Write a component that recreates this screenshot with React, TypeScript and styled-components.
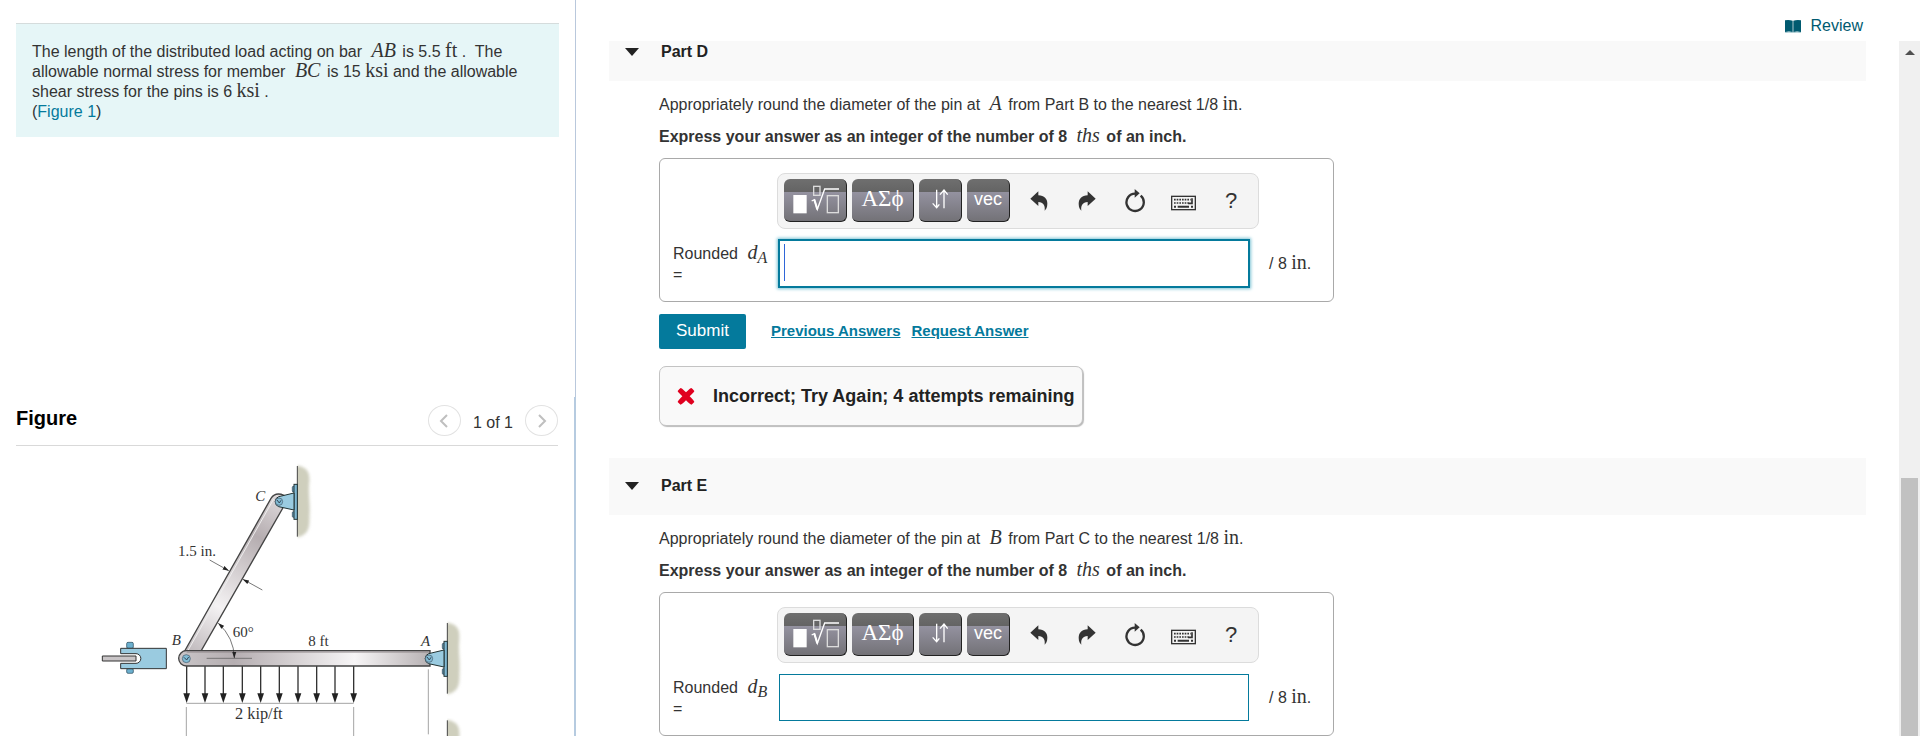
import React from "react";
import styled, { createGlobalStyle, css } from "styled-components";

const Global = createGlobalStyle`
  * { box-sizing: border-box; }
  body {
    margin: 0;
    background: #fff;
    color: #333;
    font-family: "Liberation Sans", Arial, sans-serif;
    font-size: 16px;
    line-height: 20px;
  }
  p, h2 { margin: 0; }
`;

const Page = styled.div`
  display: grid;
  grid-template-columns: 30% 1fr;
  height: 100vh;
  overflow: hidden;
`;

const Side = styled.aside`
  display: flex;
  flex-direction: column;
  min-height: 0;
`;

const ProblemPane = styled.section`
  flex: 0 0 54%;
  padding: 23px 16px 0;
  border-right: 1px solid #b9c8dc;
`;

const FigurePane = styled.section`
  flex: 1;
  min-height: 0;
  overflow: hidden;
  padding: 9px 16px 0;
  border-right: 2px solid #b6cbe0;
`;

const Intro = styled.div`
  padding: 18px 16px 15px;
  background: #e6f6f7;
  border-top: 1px solid #d5dcdc;
`;

const TextLink = styled.a`
  color: #047a9c;
  text-decoration: none;
`;

const mathFont = css`
  font-family: "Liberation Serif", "Times New Roman", serif;
  font-weight: 400;
  line-height: 0;
`;

const Var = styled.i`
  ${mathFont}
  font-size: 20px;
  padding: 0 2px 0 5px;
`;

const Unit = styled.span`
  ${mathFont}
  font-size: 20px;
`;

const Sub = styled.sub`
  font-size: 16px;
  line-height: 0;
  vertical-align: -4px;
`;

const FigureHead = styled.header`
  display: flex;
  align-items: center;
  justify-content: space-between;
  height: 40px;
  border-bottom: 1px solid #d9d9d9;
`;

const FigureTitle = styled.h2`
  color: #000;
  font-size: 20px;
  padding-bottom: 16px;
`;

const Pager = styled.nav`
  display: flex;
  align-items: center;
  gap: 12px;
  padding-bottom: 10px;
`;

const PagerText = styled.span`
  padding-top: 4px;
`;

const Round = styled.button`
  display: grid;
  place-items: center;
  width: 33px;
  height: 31px;
  padding: 0;
  background: #fff;
  border: 1px solid #e2e2e2;
  border-radius: 50%;
`;

const Drawing = styled.svg`
  display: block;
  width: 400px;
  height: 281px;
  margin: 9px 0 0 74px;
`;

const Main = styled.main`
  display: flex;
  flex-direction: column;
  min-width: 0;
  min-height: 0;
`;

const TopBar = styled.div`
  display: flex;
  flex: 0 0 41px;
  justify-content: flex-end;
  padding: 16px 57px 0 0;
`;

const Review = styled.a`
  display: flex;
  gap: 10px;
  height: 20px;
  align-items: center;
  color: #005a70;
  text-decoration: none;
`;

const Scroller = styled.div`
  display: flex;
  flex: 1;
  min-height: 0;
`;

const Parts = styled.div`
  flex: 1;
  min-width: 0;
  padding: 0 33px;
  overflow: hidden;
`;

const Track = styled.div`
  display: flex;
  flex-direction: column;
  justify-content: space-between;
  align-items: center;
  width: 21px;
  padding-top: 9px;
  background: #f0f0f0;
`;

const Thumb = styled.div`
  width: 17px;
  height: 258px;
  background: #c1c1c1;
`;

const PartHead = styled.header<{ $scrolled?: boolean }>`
  display: flex;
  align-items: center;
  gap: 22px;
  height: 57px;
  margin-top: ${(p) => (p.$scrolled ? "-17px" : "0")};
  padding: 0 0 2px 16px;
  background: #f9f9f9;
`;

const PartTitle = styled.h2`
  color: #222;
  font-size: 16px;
`;

const PartBody = styled.div`
  padding: 14px 0 32px 50px;
`;

const Prompt = styled.p<{ $strong?: boolean }>`
  margin-bottom: ${(p) => (p.$strong ? "11px" : "12px")};
  font-weight: ${(p) => (p.$strong ? 700 : 400)};
`;

const AnswerBox = styled.div`
  max-width: 675px;
  height: 144px;
  padding: 14px 13px;
  border: 1px solid #a9a9a9;
  border-radius: 6px;
`;

const Toolbar = styled.div`
  display: flex;
  gap: 5px;
  width: 482px;
  height: 56px;
  margin-left: 104px;
  padding: 5px 3px 5px 6px;
  background: #f4f4f4;
  border: 1px solid #dcdcdc;
  border-radius: 8px;
`;

const Key = styled.button<{ $w: number; $serif?: boolean }>`
  display: grid;
  flex: none;
  place-items: center;
  width: ${(p) => p.$w}px;
  height: 43px;
  padding: 0 0 2px;
  color: #fff;
  font-family: ${(p) => (p.$serif ? '"Liberation Serif", serif' : '"Liberation Sans", sans-serif')};
  font-size: ${(p) => (p.$serif ? "23px" : "18px")};
  line-height: 24px;
  background: linear-gradient(#6f6f6f 0, #646464 30%, #9492a0 31%, #737277 100%);
  border: 0;
  border-right: 1px solid #222;
  border-bottom: 1px solid #222;
  border-radius: 6px;
`;

const Tools = styled.div`
  display: flex;
  flex: 1;
`;

const Tool = styled.button`
  display: grid;
  flex: none;
  place-items: center;
  width: 48px;
  height: 43px;
  padding: 0;
  color: #333;
  font-family: inherit;
  font-size: 22px;
  background: none;
  border: 0;
`;

const AnswerRow = styled.div`
  display: flex;
  margin-top: 11px;
`;

const FieldLabel = styled.label`
  width: 106px;
  padding: 3px 4px 0 0;
  line-height: 21px;
`;

const Field = styled.div`
  position: relative;
  width: 470px;
`;

const Answer = styled.input<{ $active?: boolean }>`
  display: block;
  width: 100%;
  height: 47px;
  padding: 0 6px;
  font-size: 20px;
  border: 1px solid #047a9c;
  border-radius: 0;
  outline: none;
  box-shadow: ${(p) => (p.$active ? "0 0 0 1px #047a9c, 0 0 3px 2px #7fc4d6" : "none")};
`;

const Caret = styled.span`
  position: absolute;
  top: 4px;
  left: 5px;
  width: 1px;
  height: 37px;
  background: #2f66d8;
`;

const Suffix = styled.span`
  padding: 14px 0 0 20px;
`;

const Actions = styled.div`
  display: flex;
  align-items: center;
  gap: 11px;
  margin-top: 12px;
`;

const Submit = styled.button`
  width: 87px;
  height: 35px;
  margin-right: 14px;
  padding: 0 0 2px;
  color: #fff;
  font-family: inherit;
  font-size: 17px;
  background: #047a9c;
  border: 0;
  border-radius: 2px;
`;

const ActionLink = styled.a`
  padding-bottom: 2px;
  color: #047a9c;
  font-size: 15px;
  font-weight: 700;
`;

const Feedback = styled.div`
  display: flex;
  align-items: center;
  gap: 18px;
  width: fit-content;
  height: 60px;
  margin-top: 17px;
  padding: 0 8px 0 17px;
  color: #222;
  font-size: 18px;
  font-weight: 700;
  background: #f9f9f9;
  border: 1px solid #c3c3c3;
  border-radius: 7px;
  box-shadow: 1px 1px 1px #bbb;
`;

const Chevron = ({ next }: { next?: boolean }) => (
  <svg width="10" height="14" viewBox="0 0 10 14" fill="none" stroke="#bfbfbf" strokeWidth="2">
    <path d={next ? "M2 1l6 6-6 6" : "M8 1L2 7l6 6"} />
  </svg>
);

const BookIcon = () => (
  <svg width="16" height="13" viewBox="0 0 48 39" fill="#005a70">
    <path d="M0 1Q12-1 23 2V36Q12 33 0 36Z M25 2Q36-1 48 1V36Q36 33 25 36Z" />
    <path d="M0 38Q12 35 24 38Q36 35 48 38" fill="none" stroke="#7fb0bb" strokeWidth="2" />
  </svg>
);

const Triangle = () => (
  <svg width="14" height="8" viewBox="0 0 14 8" fill="#222">
    <path d="M0 0h14L7 8z" />
  </svg>
);

const RootIcon = () => (
  <svg width="48" height="29" viewBox="424 107 144 87" fill="none">
    <rect x="431" y="137" width="40" height="55" fill="#fff" />
    <rect x="492" y="111" width="19" height="27" stroke="#dcdcdc" strokeWidth="4" />
    <path d="M486 155l8-4 9 29 22-61h43" stroke="#fff" strokeWidth="4" />
    <path d="M494 151l9 29" stroke="#fff" strokeWidth="6" />
    <rect x="533" y="139" width="33" height="51" stroke="#dcdcdc" strokeWidth="4" />
  </svg>
);

const ArrowsIcon = () => (
  <svg width="16" height="20" viewBox="0 0 48 60" fill="none" stroke="#fff" strokeWidth="4">
    <path d="M14 2v54M2 43l12 13 8-10M36 58V5M24 17L36 3l11 14" />
  </svg>
);

const UndoIcon = ({ flip }: { flip?: boolean }) => (
  <svg width="18" height="20" viewBox="0 0 54 60" fill="#333">
    <path
      transform={flip ? "translate(54 0) scale(-1 1)" : undefined}
      d="M1 23L25 1V13C43 14 52 24 52 38C52 49 48 55 44 59C46 43 40 34 25 33V45Z"
    />
  </svg>
);

const ResetIcon = () => (
  <svg width="20" height="24" viewBox="0 0 60 72">
    <path d="M47 20A26 26 0 1 1 30 14" fill="none" stroke="#333" strokeWidth="7" />
    <path d="M29 0L44 13L29 26Z" fill="#333" />
  </svg>
);

const KeyboardIcon = () => (
  <svg width="25" height="20" viewBox="0 -12 75 60">
    <rect x="2" y="4" width="71" height="40" fill="none" stroke="#333" strokeWidth="4" />
    <path d="M9 14h50M9 24h44" stroke="#333" strokeWidth="5" strokeDasharray="5 3" />
    <path d="M9 35h6M20 35h34M60 35h6" stroke="#333" strokeWidth="6" />
    <path d="M63 10v15h-12" fill="none" stroke="#333" strokeWidth="5" />
  </svg>
);

const CrossIcon = () => (
  <svg width="18" height="17" viewBox="0 0 54 51" fill="#e0001f">
    <path d="M11 0Q14 0 27 13Q40 0 43 0Q46 1 52 9Q52 12 38 25Q52 39 52 42Q46 49 43 50Q40 50 27 37Q14 50 11 50Q8 49 2 42Q2 39 16 25Q2 12 2 9Q8 1 11 0Z" />
  </svg>
);

const LOADS = [290, 345, 400, 457, 512, 568, 624, 680, 735, 791];

const WALL = "M-12 -107H4C28 -100 36 -88 34 -60C30 -30 36 0 35 30C33 62 40 92 6 105H-12Z";

const Support = () => (
  <>
    <g clipPath="url(#wallSide)">
      <path d={WALL} fill="#cfcfbd" filter="url(#soft)" />
    </g>
    <path d="M-2 -107V105" stroke="#444" strokeWidth="3" />
    <rect x="-17" y="-46" width="6" height="17" rx="3" fill="#74b7d3" stroke="#234" strokeWidth="2" />
    <rect x="-17" y="30" width="6" height="17" rx="3" fill="#74b7d3" stroke="#234" strokeWidth="2" />
    <rect x="-12" y="-52" width="10" height="105" fill="#80b9d4" stroke="#233" strokeWidth="3" />
    <path d="M-12 -26L-58 -15A16 16 0 0 0 -58 15L-12 25Z" fill="#9acbe0" stroke="#233" strokeWidth="3" />
    <circle cx="-57" cy="0" r="11" fill="#82bdd5" stroke="#456" strokeWidth="2" />
    <path d="M-63 -5l7 9 5-8" fill="none" stroke="#345" strokeWidth="3" />
  </>
);

const Truss = () => (
  <Drawing viewBox="0 0 1200 843" role="img" aria-label="Bar AB supported by member BC">
    <defs>
      <linearGradient id="steel" x1="0" x2="1">
        <stop offset="0" stopColor="#c9c5c7" />
        <stop offset=".22" stopColor="#b5aeb1" />
        <stop offset=".7" stopColor="#f7f5f6" />
        <stop offset="1" stopColor="#b7b1b3" />
      </linearGradient>
      <linearGradient id="strut" gradientUnits="userSpaceOnUse" x1="300" y1="590" x2="570" y2="130">
        <stop offset="0" stopColor="#c0babd" />
        <stop offset=".3" stopColor="#f4f2f3" />
        <stop offset=".75" stopColor="#b5adb0" />
        <stop offset="1" stopColor="#ddd8da" />
      </linearGradient>
      <filter id="soft" x="-30%" y="-10%" width="160%" height="120%">
        <feGaussianBlur stdDeviation="4" />
      </filter>
      <clipPath id="wallSide">
        <rect x="-2" y="-115" width="60" height="230" />
      </clipPath>
      <marker id="tip" markerUnits="userSpaceOnUse" markerWidth="20" markerHeight="14" refX="18" refY="7" orient="auto-start-reverse">
        <path d="M0 1L19 7L0 13Z" fill="#222" />
      </marker>
    </defs>

    <path d="M284 588L543 130Q556 110 582 121L578 160L333 588Z" fill="url(#strut)" stroke="#444" strokeWidth="4" />
    <path d="M293 588L551 132" stroke="#eee" strokeWidth="3" />
    <path d="M289 587H1020V633H289A23 23 0 0 1 289 587Z" fill="url(#steel)" stroke="#444" strokeWidth="4" />
    <path d="M290 591H1016" stroke="#8d8588" strokeWidth="3" />
    <circle cx="289" cy="611" r="12" fill="#82bdd5" stroke="#456" strokeWidth="2" />
    <path d="M282 607l8 8 6-9" fill="none" stroke="#345" strokeWidth="3" />
    <path d="M350 610H486" stroke="#555" strokeWidth="2" />

    <g transform="translate(624 140)"><Support /></g>
    <g transform="translate(1074 611)"><Support /></g>
    <g transform="translate(1074 903)">
      <g clipPath="url(#wallSide)">
        <path d={WALL} fill="#cfcfbd" filter="url(#soft)" />
      </g>
      <path d="M-2 -107V0" stroke="#444" strokeWidth="3" />
    </g>

    <rect x="110" y="562" width="20" height="18" rx="4" fill="#6cb0cf" stroke="#245" strokeWidth="2" />
    <rect x="110" y="641" width="20" height="14" rx="4" fill="#6cb0cf" stroke="#245" strokeWidth="2" />
    <path d="M92 580H229V641H92V625H138A14 14 0 0 0 138 596H92Z" fill="#9acbe0" stroke="#333" strokeWidth="3" />
    <path d="M37 603H138V618H37Z" fill="#c9c5c7" stroke="#333" strokeWidth="3" />

    <g stroke="#333" strokeWidth="2" fill="none">
      <path d="M359 315L416 347" markerEnd="url(#tip)" />
      <path d="M517 405L459 373" markerEnd="url(#tip)" />
      <path d="M385 505Q432 548 433 609" markerStart="url(#tip)" markerEnd="url(#tip)" />
    </g>
    {LOADS.map((x) => (
      <g key={x}>
        <path d={`M${x} 634V720`} stroke="#333" strokeWidth="4" />
        <path d={`M${x - 10} 715h20l-10 29z`} fill="#222" />
      </g>
    ))}
    <path d="M289 745H791M289 756V843M791 756V843M1015 643V838" stroke="#777" strokeWidth="2" />

    <g fill="#333" fontFamily="Liberation Serif, serif" fontSize="45">
      <text x="264" y="304">1.5 in.</text>
      <text x="428" y="545">60°</text>
      <text x="655" y="572">8 ft</text>
      <text x="435" y="791" fontSize="49">2 kip/ft</text>
      <g fontStyle="italic">
        <text x="496" y="139">C</text>
        <text x="245" y="570">B</text>
        <text x="993" y="573">A</text>
      </g>
    </g>
  </Drawing>
);

type PartProps = {
  name: string;
  pin: string;
  source: string;
  scrolled?: boolean;
  active?: boolean;
  children?: React.ReactNode;
};

const Part = ({ name, pin, source, scrolled, active, children }: PartProps) => {
  const id = `answer-${pin}`;
  return (
    <section>
      <PartHead $scrolled={scrolled}>
        <Triangle />
        <PartTitle>Part {name}</PartTitle>
      </PartHead>
      <PartBody>
        <Prompt>
          Appropriately round the diameter of the pin at <Var>{pin}</Var> from Part {source} to the nearest 1/8 <Unit>in</Unit>.
        </Prompt>
        <Prompt $strong>
          Express your answer as an integer of the number of 8 <Var>ths</Var> of an inch.
        </Prompt>
        <AnswerBox>
          <Toolbar>
            <Key $w={63} aria-label="Templates"><RootIcon /></Key>
            <Key $w={62} $serif>ΑΣϕ</Key>
            <Key $w={43} aria-label="Arrows"><ArrowsIcon /></Key>
            <Key $w={43}>vec</Key>
            <Tools>
              <Tool aria-label="Undo"><UndoIcon /></Tool>
              <Tool aria-label="Redo"><UndoIcon flip /></Tool>
              <Tool aria-label="Reset"><ResetIcon /></Tool>
              <Tool aria-label="Keyboard"><KeyboardIcon /></Tool>
              <Tool>?</Tool>
            </Tools>
          </Toolbar>
          <AnswerRow>
            <FieldLabel htmlFor={id}>
              Rounded <Var>d<Sub>{pin}</Sub></Var> =
            </FieldLabel>
            <Field>
              <Answer id={id} type="text" $active={active} />
              {active && <Caret />}
            </Field>
            <Suffix>/ 8 <Unit>in</Unit>.</Suffix>
          </AnswerRow>
        </AnswerBox>
        {children}
      </PartBody>
    </section>
  );
};

export default function App() {
  return (
    <Page>
      <Global />
      <Side>
        <ProblemPane>
          <Intro>
            <p>
              The length of the distributed load acting on bar <Var>AB</Var> is 5.5 <Unit>ft</Unit> .&nbsp; The allowable
              normal stress for member <Var>BC</Var> is 15 <Unit>ksi</Unit> and the allowable shear stress for the pins is
              6 <Unit>ksi</Unit> .
            </p>
            <p>(<TextLink href="#figure">Figure 1</TextLink>)</p>
          </Intro>
        </ProblemPane>
        <FigurePane id="figure">
          <FigureHead>
            <FigureTitle>Figure</FigureTitle>
            <Pager>
              <Round aria-label="Previous figure"><Chevron /></Round>
              <PagerText>1 of 1</PagerText>
              <Round aria-label="Next figure"><Chevron next /></Round>
            </Pager>
          </FigureHead>
          <Truss />
        </FigurePane>
      </Side>
      <Main>
        <TopBar>
          <Review href="#review"><BookIcon />Review</Review>
        </TopBar>
        <Scroller>
          <Parts>
            <Part name="D" pin="A" source="B" scrolled active>
              <Actions>
                <Submit>Submit</Submit>
                <ActionLink href="#previous">Previous Answers</ActionLink>
                <ActionLink href="#request">Request Answer</ActionLink>
              </Actions>
              <Feedback><CrossIcon />Incorrect; Try Again; 4 attempts remaining</Feedback>
            </Part>
            <Part name="E" pin="B" source="C" />
          </Parts>
          <Track>
            <svg width="10" height="5" viewBox="0 0 10 5" fill="#505050"><path d="M0 5L5 0l5 5z" /></svg>
            <Thumb />
          </Track>
        </Scroller>
      </Main>
    </Page>
  );
}
